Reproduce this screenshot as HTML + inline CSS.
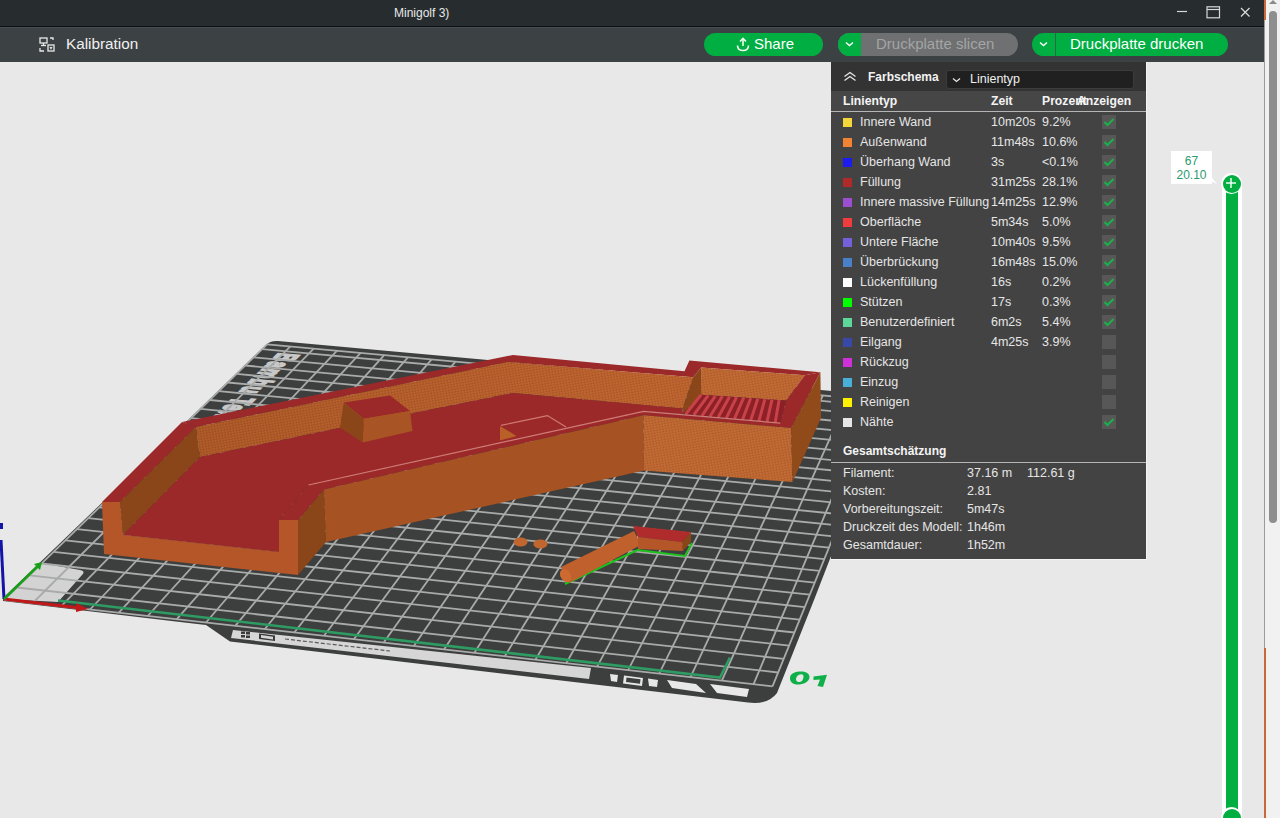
<!DOCTYPE html>
<html><head><meta charset="utf-8">
<style>
*{box-sizing:border-box;margin:0;padding:0}
html,body{width:1280px;height:818px;overflow:hidden;background:#e8e8e8;font-family:"Liberation Sans",sans-serif}
.abs{position:absolute}
#title{left:0;top:0;width:1264px;height:27px;background:#272d2f;border-bottom:1px solid #0b1114}
#title .t{position:absolute;left:394px;top:6px;font-size:12px;color:#e8e8e8;white-space:nowrap}
#tool{left:0;top:27px;width:1264px;height:35px;background:#3c4244;border-top:1px solid #474e51}
#tool .k{position:absolute;left:66px;top:7px;font-size:15.3px;color:#f0f0f0}
.btn{position:absolute;top:5px;height:23px;border-radius:11.5px;font-size:15px;color:#fff;white-space:nowrap;line-height:22px}
#scene{left:0;top:0;width:1264px;height:818px}
#panel{left:831px;top:62px;width:316px;height:498px;background:#434343;border-right:1px solid #f4f4f4;border-bottom:1px solid #f4f4f4;color:#e6e6e6;font-size:12.5px}
#phead{position:absolute;left:0;top:0;width:315px;height:29px;background:#333}
.row{position:absolute;left:0;height:20px;width:315px;white-space:nowrap}
.row span{position:absolute;top:2px}
.sw{position:absolute;left:12px;top:5px;width:9px;height:9px}
.cb{position:absolute;left:271px;top:2px;width:14px;height:14px;background:#575757}
.cb svg{position:absolute;left:1px;top:2px}
.est{position:absolute;left:12px;height:18px;white-space:nowrap}
.est span{position:absolute}
</style></head><body>
<svg id="scene" class="abs" width="1264" height="818" viewBox="0 0 1264 818">
<path d="M3,601 L180,622 L206,625 L230,641.5 L748,702.5 Q768,705 777,693 L814,600 L890,404 L888,396 L278,341 Q270,340.5 266,345 L3,598 Z" fill="#3d3e3e"/>
<path d="M4,599 L58,602 L82,575 Q86,571 80,570 L41,563 Z" fill="#d3d3d3"/>
<text transform="matrix(-0.8213,0.8137,-2.3415,-0.2168,279.20,352.48)" font-family="Liberation Sans" font-weight="bold" font-size="13" fill="#c8c8c8" stroke="#c8c8c8" stroke-width="1.1" letter-spacing="1.2">Bambu Textured PEI</text>
<g stroke="#a9aaaa" stroke-width="1.8"><line x1="4.2" y1="599.8" x2="267.1" y2="344.3"/><line x1="32.7" y1="603.0" x2="290.4" y2="346.4"/><line x1="61.3" y1="606.2" x2="313.7" y2="348.6"/><line x1="90.0" y1="609.5" x2="337.1" y2="350.7"/><line x1="118.8" y1="612.7" x2="360.6" y2="352.9"/><line x1="147.7" y1="616.0" x2="384.2" y2="355.1"/><line x1="176.8" y1="619.2" x2="407.9" y2="357.3"/><line x1="206.0" y1="622.5" x2="431.6" y2="359.4"/><line x1="235.3" y1="625.8" x2="455.4" y2="361.6"/><line x1="264.7" y1="629.2" x2="479.3" y2="363.8"/><line x1="294.3" y1="632.5" x2="503.3" y2="366.1"/><line x1="324.0" y1="635.8" x2="527.4" y2="368.3"/><line x1="353.8" y1="639.2" x2="551.5" y2="370.5"/><line x1="383.7" y1="642.6" x2="575.8" y2="372.7"/><line x1="413.8" y1="646.0" x2="600.1" y2="375.0"/><line x1="444.0" y1="649.4" x2="624.5" y2="377.2"/><line x1="474.4" y1="652.8" x2="649.0" y2="379.5"/><line x1="504.8" y1="656.2" x2="673.6" y2="381.7"/><line x1="535.4" y1="659.7" x2="698.2" y2="384.0"/><line x1="566.2" y1="663.2" x2="723.0" y2="386.3"/><line x1="597.1" y1="666.6" x2="747.8" y2="388.6"/><line x1="628.1" y1="670.1" x2="772.7" y2="390.9"/><line x1="659.2" y1="673.6" x2="797.7" y2="393.2"/><line x1="690.5" y1="677.2" x2="822.8" y2="395.5"/><line x1="721.9" y1="680.7" x2="848.0" y2="397.8"/><line x1="753.5" y1="684.3" x2="873.2" y2="400.1"/><line x1="772.5" y1="686.4" x2="888.4" y2="401.5"/><line x1="4.2" y1="599.8" x2="772.5" y2="686.4"/><line x1="16.9" y1="587.5" x2="778.1" y2="672.5"/><line x1="29.4" y1="575.4" x2="783.7" y2="658.9"/><line x1="41.6" y1="563.5" x2="789.1" y2="645.6"/><line x1="53.5" y1="551.9" x2="794.4" y2="632.5"/><line x1="65.3" y1="540.4" x2="799.6" y2="619.7"/><line x1="76.9" y1="529.2" x2="804.8" y2="607.1"/><line x1="88.2" y1="518.2" x2="809.8" y2="594.7"/><line x1="99.3" y1="507.4" x2="814.7" y2="582.6"/><line x1="110.3" y1="496.8" x2="819.6" y2="570.8"/><line x1="121.0" y1="486.3" x2="824.3" y2="559.1"/><line x1="131.6" y1="476.1" x2="829.0" y2="547.6"/><line x1="141.9" y1="466.0" x2="833.5" y2="536.4"/><line x1="152.1" y1="456.1" x2="838.0" y2="525.4"/><line x1="162.2" y1="446.3" x2="842.4" y2="514.5"/><line x1="172.0" y1="436.7" x2="846.8" y2="503.9"/><line x1="181.7" y1="427.3" x2="851.0" y2="493.4"/><line x1="191.2" y1="418.1" x2="855.2" y2="483.1"/><line x1="200.6" y1="408.9" x2="859.3" y2="473.0"/><line x1="209.8" y1="400.0" x2="863.4" y2="463.1"/><line x1="218.9" y1="391.2" x2="867.4" y2="453.3"/><line x1="227.8" y1="382.5" x2="871.3" y2="443.7"/><line x1="236.6" y1="373.9" x2="875.1" y2="434.2"/><line x1="245.3" y1="365.5" x2="878.9" y2="425.0"/><line x1="253.8" y1="357.3" x2="882.6" y2="415.8"/><line x1="262.2" y1="349.1" x2="886.3" y2="406.8"/><line x1="267.1" y1="344.3" x2="888.4" y2="401.5"/></g>
<polygon points="233,630 591,668 589,679 231,638" fill="#d6d6d6" />
<polygon points="667,680 696,684 706,693 672,688" fill="#e8e8e8" />
<polygon points="710,684 749,689 747,697 717,693" fill="#e8e8e8" />
<g fill="#3a3a3a"><rect x="241" y="631.5" width="4" height="2.5"/><rect x="246" y="632" width="4" height="2.5"/><rect x="241" y="635" width="4" height="2.5"/><rect x="246" y="635.5" width="4" height="2.5"/></g>
<path d="M259,633.5 L275,635.5 L275,641 L259,639 Z M261,635 L273,636.7 L273,639.5 L261,637.8 Z" fill="#3a3a3a" fill-rule="evenodd"/>
<g stroke="#5a5a5a" stroke-width="1.2" stroke-dasharray="4 2"><line x1="285" y1="639" x2="390" y2="651"/></g>
<path d="M610,674 L618,675 L617,682 L611,681 Z" fill="#e6e6e6"/><path d="M624,675.5 L643,678 L642,686 L623,683.5 Z M626.5,677.5 L640.5,679.3 L640,683.8 L626,682 Z" fill="#e6e6e6" fill-rule="evenodd"/><path d="M648,678.5 L658,680 L657,687 L649,686 Z" fill="#e6e6e6"/>
<polyline points="58,600.5 720,677.5 730,657.5" fill="none" stroke="#2e9c62" stroke-width="2.6"/>
<line x1="4" y1="599" x2="1" y2="540" stroke="#1414a8" stroke-width="3"/><rect x="0" y="523" width="3" height="6" fill="#1414a8"/>
<line x1="4" y1="599" x2="80" y2="608" stroke="#c01818" stroke-width="3"/>
<polygon points="76,603 88,609 76,612" fill="#c01818"/>
<line x1="4" y1="599" x2="38" y2="566" stroke="#18a018" stroke-width="2.5"/>
<polygon points="34,564 42,562 40,570" fill="#18a018"/>
<g fill="#0fb04a"><path fill-rule="evenodd" d="M790,678 C790,673 796,671.5 801,671.5 C807,671.5 809.5,674 809.5,677 C809.5,682 803,684.5 798,684.5 C792.5,684.5 790,682 790,678 Z M796,679.5 C796,681.5 798,682 799.5,682 C802,682 803.5,679 803.5,676.5 C803.5,675 802.5,674.2 801,674.2 C798,674.2 796,677 796,679.5 Z"/><polygon points="813.5,676.5 827,674.8 823,687 817.5,686 820,679.5 813.5,680"/></g>
<defs><pattern id="tx" width="3" height="2.6" patternUnits="userSpaceOnUse" patternTransform="rotate(-10)"><rect x="0.3" y="0.3" width="1" height="1" fill="#e89a60" opacity="0.45"/><rect x="1.8" y="1.6" width="1" height="1" fill="#7a3810" opacity="0.35"/></pattern></defs>
<polygon points="182,422 513,355 684.5,371.3 689.4,360.5 820.4,372.3 804.8,375.2 701.1,367.4 693.3,377.2 508,362 196,427" fill="#9c292a" />
<polygon points="102,502 182,422 196,427 120,502" fill="#9c292a" />
<defs><linearGradient id="bw" gradientUnits="userSpaceOnUse" x1="200" y1="0" x2="640" y2="0"><stop offset="0" stop-color="#a85424"/><stop offset="1" stop-color="#b95f2c"/></linearGradient></defs>
<polygon points="196,427 508,362 693.3,377.2 682.6,408.4 513,393 339,428 200,457" fill="url(#bw)" />
<polygon points="196,427 508,362 693.3,377.2 682.6,408.4 513,393 339,428 200,457" fill="url(#tx)" />
<polygon points="693.3,377.2 701.1,367.4 701.1,394.8 682.6,414.3 682.6,408.4" fill="#8a4619" />
<polygon points="701.1,367.4 804.8,375.2 786.2,400.6 701.1,394.8" fill="#bb6430" />
<polygon points="701.1,367.4 804.8,375.2 786.2,400.6 701.1,394.8" fill="url(#tx)" />
<polygon points="120,502 196,427 200,457 123,535" fill="#8a4619" />
<polygon points="123,535 200,457 339,428 513,393 682.6,408.4 682.6,414.3 643.5,411.4 308.4,485 279,520 279,552" fill="#9c292a" />
<polygon points="701.1,394.8 786.2,400.6 780.3,423.1 682.6,414.3" fill="#8c2026" />
<g stroke="#c8424a" stroke-width="3"><line x1="701.1" y1="394.8" x2="685.6" y2="414.3"/><line x1="708.2" y1="395.3" x2="693.7" y2="415.0"/><line x1="715.3" y1="395.8" x2="701.9" y2="415.8"/><line x1="722.4" y1="396.2" x2="710.0" y2="416.5"/><line x1="729.5" y1="396.7" x2="718.2" y2="417.2"/><line x1="736.6" y1="397.2" x2="726.3" y2="418.0"/><line x1="743.7" y1="397.7" x2="734.5" y2="418.7"/><line x1="750.7" y1="398.2" x2="742.6" y2="419.4"/><line x1="757.8" y1="398.7" x2="750.7" y2="420.2"/><line x1="764.9" y1="399.2" x2="758.9" y2="420.9"/><line x1="772.0" y1="399.6" x2="767.0" y2="421.6"/><line x1="779.1" y1="400.1" x2="775.2" y2="422.4"/></g>
<polygon points="804.8,375.2 786.2,400.6 780.3,423.1 790,423" fill="#9c292a" />
<polygon points="279,520 308.4,485 643.5,411.4 780.3,423.1 804.8,375.2 820.4,372.3 791.1,428 643.5,415.3 324,489.6 298,520" fill="#9c292a" />
<polyline points="308.4,485 643.5,411.4 780.3,423.1" fill="none" stroke="#d88a84" stroke-width="1.2" opacity="0.85"/>
<polygon points="102,502 120,502 123,535 279,552 279,520 298,520 298,575 104,554" fill="#b45628" />
<polygon points="298,520 324,489.6 326,542 298,575" fill="#8a4619" />
<polygon points="324,489.6 643.5,415.3 644,470.5 326,542" fill="#a65222" />
<polygon points="643.5,415.3 791.1,428 792.5,482 644,470.5" fill="#bb6430" />
<polygon points="643.5,415.3 791.1,428 792.5,482 644,470.5" fill="url(#tx)" />
<polygon points="820.4,372.3 821,418 792.5,482 791.1,428" fill="#914b1b" />
<polygon points="343.75,402.5 390,395.5 410,411 363.75,418.75" fill="#9c292a" />
<polygon points="363.75,418.75 410,411 412.5,431 362.5,442.5" fill="#a85424" />
<polygon points="343.75,402.5 363.75,418.75 362.5,442.5 340,427.5" fill="#8a4619" />
<polygon points="501,425.4 547.4,415.6 566,427 518,437" fill="#9c292a" />
<polygon points="500,426 500,440.6 516.6,436" fill="#b86028" />
<polyline points="501,425.4 547.4,415.6 566,427" fill="none" stroke="#d88a84" stroke-width="1.2" opacity="0.85"/>
<polyline points="565,584 637.5,550 685,556 692,543" fill="none" stroke="#1cc21c" stroke-width="2"/>
<polygon points="561,567 634,531 641,545 569,583" fill="#c0602c" />
<ellipse cx="565.5" cy="575.5" rx="5" ry="7" transform="rotate(-30 565.5 575.5)" fill="#cc6a32"/>
<polygon points="633,526 691,532 682,542 638,537" fill="#b02c2c" />
<polygon points="638,537 682,542 683,551 638,549" fill="#b45628" />
<polygon points="691,532 691,542 683,551 682,542" fill="#8a4619" />
<ellipse cx="520.6" cy="542" rx="7" ry="4.5" fill="#c0662e"/>
<ellipse cx="540.4" cy="544" rx="7" ry="4.5" fill="#c0662e"/>
</svg>

<div id="title" class="abs"><div class="t">Minigolf 3)</div>
<svg class="abs" style="left:1176px;top:5px" width="80" height="16" viewBox="0 0 80 16">
<line x1="1" y1="6.5" x2="11" y2="6.5" stroke="#d8d8d8" stroke-width="1.2"/>
<rect x="31" y="1.8" width="12.5" height="11" fill="none" stroke="#d8d8d8" stroke-width="1.2"/>
<line x1="31" y1="4.5" x2="43.5" y2="4.5" stroke="#d8d8d8" stroke-width="1.2"/>
<line x1="65" y1="3" x2="73.5" y2="11.5" stroke="#d8d8d8" stroke-width="1.2"/>
<line x1="73.5" y1="3" x2="65" y2="11.5" stroke="#d8d8d8" stroke-width="1.2"/>
</svg>
</div>

<div id="tool" class="abs">
<svg class="abs" style="left:38px;top:8px" width="20" height="17" viewBox="0 0 20 17">
<g fill="none" stroke="#e8e8e8" stroke-width="1.3">
<rect x="2" y="2" width="7" height="5"/><line x1="5.5" y1="7" x2="5.5" y2="9"/><line x1="3" y1="9.5" x2="8" y2="9.5"/>
<polyline points="12,2 15,2 15,4"/><polyline points="2,12 2,15 6,15"/>
<rect x="10" y="9" width="6" height="6"/><polyline points="12,11 13,12.5 14,11"/>
</g></svg>
<div class="k">Kalibration</div>
<div class="btn" style="left:704px;width:119px;background:#00ae42"><svg class="abs" style="left:32px;top:4px" width="14" height="16" viewBox="0 0 14 16"><g fill="none" stroke="#f0fff0" stroke-width="1.6"><polyline points="4,4.5 7,1.5 10,4.5"/><line x1="7" y1="2" x2="7" y2="9"/><path d="M1.5,8.5 Q1.5,13.5 7,13.5 Q12.5,13.5 12.5,8.5"/></g></svg><span style="position:absolute;left:50px">Share</span></div>
<div class="btn" style="left:838px;width:180px;background:#6f7071;color:#a3a5a6"><div class="abs" style="left:0;top:0;width:23px;height:23px;border-radius:11.5px 0 0 11.5px;background:#00ae42"></div><svg class="abs" style="left:6px;top:8px" width="11" height="7" viewBox="0 0 11 7"><polyline points="2,1.5 5.5,4.5 9,1.5" fill="none" stroke="#fff" stroke-width="1.4"/></svg><span style="position:absolute;left:38px">Druckplatte slicen</span></div>
<div class="btn" style="left:1032px;width:196px;background:#00ae42"><div class="abs" style="left:23px;top:0;width:1px;height:23px;background:#2d6a43"></div><svg class="abs" style="left:6px;top:8px" width="11" height="7" viewBox="0 0 11 7"><polyline points="2,1.5 5.5,4.5 9,1.5" fill="none" stroke="#fff" stroke-width="1.4"/></svg><span style="position:absolute;left:38px">Druckplatte drucken</span></div>
</div>

<div id="panel" class="abs">
<div id="phead">
<svg class="abs" style="left:12px;top:9px" width="14" height="11" viewBox="0 0 14 11"><g fill="none" stroke="#e6e6e6" stroke-width="1.3"><polyline points="1.5,5.5 7,1.5 12.5,5.5"/><polyline points="1.5,9.5 7,5.5 12.5,9.5"/></g></svg>
<span style="position:absolute;left:37px;top:7.5px;font-weight:bold;font-size:12px;color:#f2f2f2">Farbschema</span>
<div class="abs" style="left:115px;top:8px;width:188px;height:19px;background:#202020;border:1px solid #3c3c3c;border-radius:3px"></div>
<svg class="abs" style="left:120px;top:15px" width="11" height="7" viewBox="0 0 11 7"><polyline points="2,1.5 5.5,4.5 9,1.5" fill="none" stroke="#e6e6e6" stroke-width="1.3"/></svg>
<span style="position:absolute;left:139px;top:10px;color:#f0f0f0">Linientyp</span>
</div>
<div class="abs" style="left:0;top:29px;width:315px;height:20px;background:#464646"></div>
<div class="row" style="top:29.5px;font-weight:bold;font-size:12.2px;color:#f4f4f4"><span style="left:12px">Linientyp</span><span style="left:160px">Zeit</span><span style="left:211px">Prozent</span><span style="left:246px">Anzeigen</span></div>
<div class="abs" style="left:0;top:49px;width:315px;height:1px;background:#b5b5b5"></div>
<div class="row" style="top:51px"><div class="sw" style="background:#f5d63a"></div><span style="left:29px">Innere Wand</span><span style="left:160px">10m20s</span><span style="left:211px">9.2%</span><div class="cb"><svg width="12" height="10" viewBox="0 0 12 10"><polyline points="1.5,5 4.5,8 10.5,2" fill="none" stroke="#19b24a" stroke-width="2"/></svg></div></div>
<div class="row" style="top:71px"><div class="sw" style="background:#f08434"></div><span style="left:29px">Außenwand</span><span style="left:160px">11m48s</span><span style="left:211px">10.6%</span><div class="cb"><svg width="12" height="10" viewBox="0 0 12 10"><polyline points="1.5,5 4.5,8 10.5,2" fill="none" stroke="#19b24a" stroke-width="2"/></svg></div></div>
<div class="row" style="top:91px"><div class="sw" style="background:#1c1cf0"></div><span style="left:29px">Überhang Wand</span><span style="left:160px">3s</span><span style="left:211px">&lt;0.1%</span><div class="cb"><svg width="12" height="10" viewBox="0 0 12 10"><polyline points="1.5,5 4.5,8 10.5,2" fill="none" stroke="#19b24a" stroke-width="2"/></svg></div></div>
<div class="row" style="top:111px"><div class="sw" style="background:#b02a2a"></div><span style="left:29px">Füllung</span><span style="left:160px">31m25s</span><span style="left:211px">28.1%</span><div class="cb"><svg width="12" height="10" viewBox="0 0 12 10"><polyline points="1.5,5 4.5,8 10.5,2" fill="none" stroke="#19b24a" stroke-width="2"/></svg></div></div>
<div class="row" style="top:131px"><div class="sw" style="background:#9b4fd0"></div><span style="left:29px">Innere massive Füllung</span><span style="left:160px">14m25s</span><span style="left:211px">12.9%</span><div class="cb"><svg width="12" height="10" viewBox="0 0 12 10"><polyline points="1.5,5 4.5,8 10.5,2" fill="none" stroke="#19b24a" stroke-width="2"/></svg></div></div>
<div class="row" style="top:151px"><div class="sw" style="background:#f03c3c"></div><span style="left:29px">Oberfläche</span><span style="left:160px">5m34s</span><span style="left:211px">5.0%</span><div class="cb"><svg width="12" height="10" viewBox="0 0 12 10"><polyline points="1.5,5 4.5,8 10.5,2" fill="none" stroke="#19b24a" stroke-width="2"/></svg></div></div>
<div class="row" style="top:171px"><div class="sw" style="background:#7460d8"></div><span style="left:29px">Untere Fläche</span><span style="left:160px">10m40s</span><span style="left:211px">9.5%</span><div class="cb"><svg width="12" height="10" viewBox="0 0 12 10"><polyline points="1.5,5 4.5,8 10.5,2" fill="none" stroke="#19b24a" stroke-width="2"/></svg></div></div>
<div class="row" style="top:191px"><div class="sw" style="background:#4a80c8"></div><span style="left:29px">Überbrückung</span><span style="left:160px">16m48s</span><span style="left:211px">15.0%</span><div class="cb"><svg width="12" height="10" viewBox="0 0 12 10"><polyline points="1.5,5 4.5,8 10.5,2" fill="none" stroke="#19b24a" stroke-width="2"/></svg></div></div>
<div class="row" style="top:211px"><div class="sw" style="background:#ffffff"></div><span style="left:29px">Lückenfüllung</span><span style="left:160px">16s</span><span style="left:211px">0.2%</span><div class="cb"><svg width="12" height="10" viewBox="0 0 12 10"><polyline points="1.5,5 4.5,8 10.5,2" fill="none" stroke="#19b24a" stroke-width="2"/></svg></div></div>
<div class="row" style="top:231px"><div class="sw" style="background:#00ff00"></div><span style="left:29px">Stützen</span><span style="left:160px">17s</span><span style="left:211px">0.3%</span><div class="cb"><svg width="12" height="10" viewBox="0 0 12 10"><polyline points="1.5,5 4.5,8 10.5,2" fill="none" stroke="#19b24a" stroke-width="2"/></svg></div></div>
<div class="row" style="top:251px"><div class="sw" style="background:#5ed89a"></div><span style="left:29px">Benutzerdefiniert</span><span style="left:160px">6m2s</span><span style="left:211px">5.4%</span><div class="cb"><svg width="12" height="10" viewBox="0 0 12 10"><polyline points="1.5,5 4.5,8 10.5,2" fill="none" stroke="#19b24a" stroke-width="2"/></svg></div></div>
<div class="row" style="top:271px"><div class="sw" style="background:#3848a8"></div><span style="left:29px">Eilgang</span><span style="left:160px">4m25s</span><span style="left:211px">3.9%</span><div class="cb"></div></div>
<div class="row" style="top:291px"><div class="sw" style="background:#d030d8"></div><span style="left:29px">Rückzug</span><span style="left:160px"></span><span style="left:211px"></span><div class="cb"></div></div>
<div class="row" style="top:311px"><div class="sw" style="background:#48b0d8"></div><span style="left:29px">Einzug</span><span style="left:160px"></span><span style="left:211px"></span><div class="cb"></div></div>
<div class="row" style="top:331px"><div class="sw" style="background:#ffef00"></div><span style="left:29px">Reinigen</span><span style="left:160px"></span><span style="left:211px"></span><div class="cb"></div></div>
<div class="row" style="top:351px"><div class="sw" style="background:#e6e6e6"></div><span style="left:29px">Nähte</span><span style="left:160px"></span><span style="left:211px"></span><div class="cb"><svg width="12" height="10" viewBox="0 0 12 10"><polyline points="1.5,5 4.5,8 10.5,2" fill="none" stroke="#19b24a" stroke-width="2"/></svg></div></div>

<div class="est" style="top:381.5px;font-weight:bold;font-size:12px;color:#f4f4f4"><span style="left:0">Gesamtschätzung</span></div>
<div class="abs" style="left:0;top:400px;width:315px;height:1px;background:#b5b5b5"></div>
<div class="est" style="top:404px"><span style="left:0">Filament:</span><span style="left:124px">37.16 m</span><span style="left:184px">112.61 g</span></div>
<div class="est" style="top:422px"><span style="left:0">Kosten:</span><span style="left:124px">2.81</span><span style="left:184px"></span></div>
<div class="est" style="top:440px"><span style="left:0">Vorbereitungszeit:</span><span style="left:124px">5m47s</span><span style="left:184px"></span></div>
<div class="est" style="top:458px"><span style="left:0">Druckzeit des Modell:</span><span style="left:124px">1h46m</span><span style="left:184px"></span></div>
<div class="est" style="top:476px"><span style="left:0">Gesamtdauer:</span><span style="left:124px">1h52m</span><span style="left:184px"></span></div>
</div>

<!-- slider -->
<div class="abs" style="left:1222px;top:176px;width:20px;height:650px;background:#fff;border-radius:10px"></div>
<div class="abs" style="left:1226px;top:184px;width:12px;height:640px;background:#00ae42"></div>
<div class="abs" style="left:1221px;top:173px;width:21px;height:21px;border-radius:50%;background:#fff"></div>
<div class="abs" style="left:1222.5px;top:174.5px;width:18px;height:18px;border-radius:50%;background:#00ae42"></div>
<svg class="abs" style="left:1224px;top:176px" width="14" height="14" viewBox="0 0 14 14"><g stroke="#fff" stroke-width="1.4"><line x1="7" y1="2" x2="7" y2="12"/><line x1="2" y1="7" x2="12" y2="7"/></g></svg>
<div class="abs" style="left:1221px;top:807px;width:21px;height:21px;border-radius:50%;background:#fff"></div>
<div class="abs" style="left:1222.5px;top:808.5px;width:18px;height:18px;border-radius:50%;background:#00ae42"></div>
<div class="abs" style="left:1171px;top:151px;width:41px;height:33px;background:#fff"></div>
<svg class="abs" style="left:1205px;top:178px" width="14" height="10" viewBox="0 0 14 10"><polygon points="0,0 7,0 12,6" fill="#fff"/></svg>
<div class="abs" style="left:1171px;top:153.5px;width:41px;text-align:center;font-size:12px;line-height:14px;color:#2a9a6e">67<br>20.10</div>

<!-- right strip / scrollbar -->
<div class="abs" style="left:1264px;top:0;width:16px;height:818px;background:#f1f1f1"></div>
<div class="abs" style="left:1264px;top:0;width:2px;height:20px;background:#c8693a"></div>
<div class="abs" style="left:1264px;top:20px;width:1px;height:628px;background:#9a9a9a"></div>
<div class="abs" style="left:1264px;top:648px;width:2px;height:170px;background:#c8693a"></div>
<div class="abs" style="left:1269px;top:11px;width:8px;height:512px;border-radius:4px;background:#8e8e8e"></div>
<svg class="abs" style="left:1268px;top:0" width="10" height="5" viewBox="0 0 10 5"><polygon points="1,4 5,0 9,4" fill="#8a8a8a"/></svg>
</body></html>
